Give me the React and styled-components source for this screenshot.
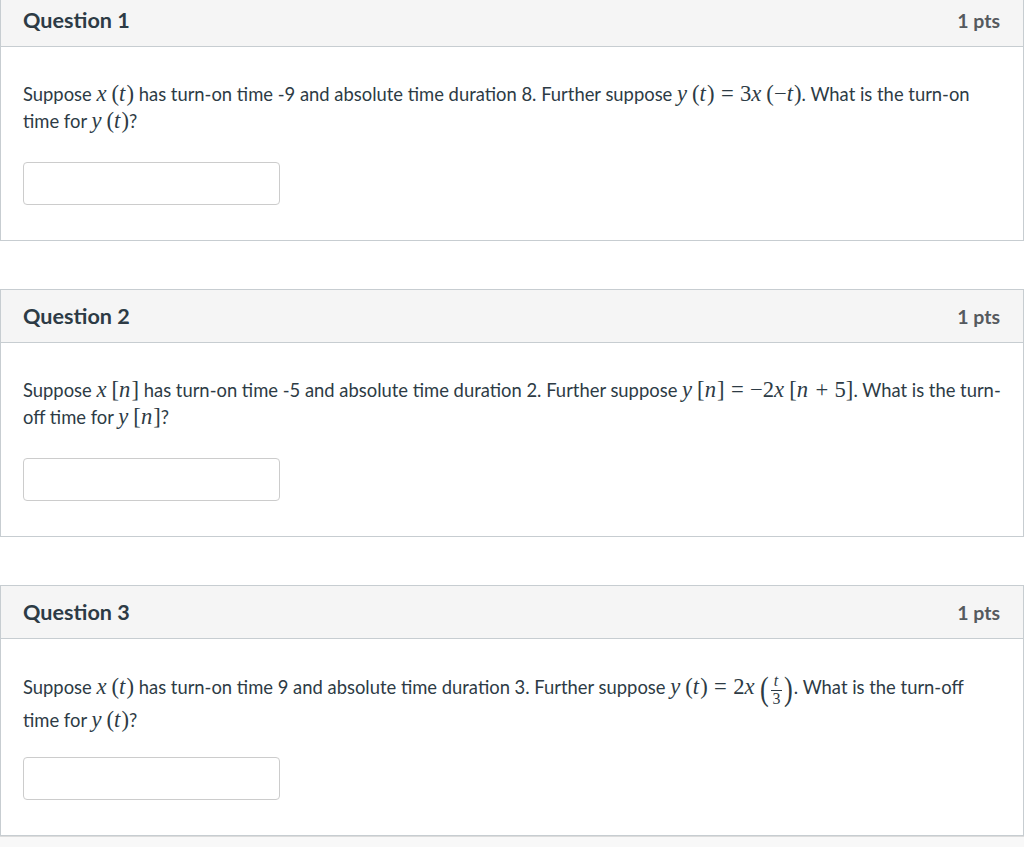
import React from "react";
import styled, { createGlobalStyle } from "styled-components";

const GlobalStyle = createGlobalStyle`
  html, body {
    margin: 0;
    padding: 0;
    background: #ffffff;
  }
  body {
    font-family: Lato, "Liberation Sans", sans-serif;
    color: #2d3b45;
  }
`;

const Page = styled.div`
  margin-top: -7px;
  width: 1024px;
`;

const Card = styled.section`
  border: 1px solid #c7cdd1;
  background: #fff;
  margin-bottom: 48px;
`;

const Header = styled.header`
  display: flex;
  align-items: center;
  justify-content: space-between;
  height: 52px;
  padding: 0 23px 0 22px;
  background: #f5f5f5;
  border-bottom: 1px solid #c7cdd1;
`;

const Title = styled.h2`
  margin: 0;
  font-size: 21.6px;
  font-weight: 700;
  color: #2d3b45;
`;

const Points = styled.span`
  font-size: 19.5px;
  font-weight: 700;
  color: #555a5e;
`;

const Body = styled.div`
  padding: 34px 21px 35px 22px;
`;

const Text = styled.p`
  margin: 0;
  font-size: 18.4px;
  line-height: 27px;
`;

const Answer = styled.input`
  display: block;
  box-sizing: border-box;
  margin-top: ${(p) => p.$gap || 27}px;
  width: 257px;
  height: 43px;
  border: 1px solid #ccc;
  border-radius: 4px;
  background: #fff;
`;

const Math = styled.span`
  font-family: "Liberation Serif", "DejaVu Serif", serif;
  font-size: 1.23em;
  line-height: 1;
  white-space: nowrap;
`;

const V = styled.i`
  font-style: italic;
  margin-right: 0.05em;
`;

const Op = styled.span`
  margin: 0 0.28em;
`;

const Paren = styled.span`
  margin-left: ${(p) => (p.$left ? "0.17em" : "0")};
`;

const BigParen = styled.span`
  display: inline-block;
  font-size: 1.45em;
  line-height: 1;
  vertical-align: -0.2em;
  transform: scaleX(0.8);
  margin-left: ${(p) => (p.$left ? "0.1em" : "0")};
`;

const Frac = styled.span`
  display: inline-flex;
  flex-direction: column;
  align-items: center;
  vertical-align: 0.5em;
  font-size: 0.7em;
  line-height: 1;
  margin: 0 0.05em;
`;

const Num = styled.span`
  padding: 0 0.2em 0.05em;
  border-bottom: 1px solid #2d3b45;
`;

const Den = styled.span`
  padding-top: 0.05em;
`;

const Footer = styled.div`
  height: 20px;
  margin-top: -48px;
  background: #f8f8f8;
  border-top: 1px solid #dcdcdc;
`;

const Question = ({ n, gap, children }) => (
  <Card>
    <Header>
      <Title>Question {n}</Title>
      <Points>1 pts</Points>
    </Header>
    <Body>
      <Text>{children}</Text>
      <Answer type="text" $gap={gap} />
    </Body>
  </Card>
);

export default function App() {
  return (
    <Page>
      <GlobalStyle />
      <Question n={1}>
        Suppose{" "}
        <Math>
          <V>x</V>
          <Paren $left>(</Paren>
          <V>t</V>)
        </Math>{" "}
        has turn-on time -9 and absolute time duration 8. Further suppose{" "}
        <Math>
          <V>y</V>
          <Paren $left>(</Paren>
          <V>t</V>)<Op>=</Op>3<V>x</V>
          <Paren $left>(</Paren>−<V>t</V>)
        </Math>
        . What is the turn-on time for{" "}
        <Math>
          <V>y</V>
          <Paren $left>(</Paren>
          <V>t</V>)
        </Math>
        ?
      </Question>
      <Question n={2}>
        Suppose{" "}
        <Math>
          <V>x</V>
          <Paren $left>[</Paren>
          <V>n</V>]
        </Math>{" "}
        has turn-on time -5 and absolute time duration 2. Further suppose{" "}
        <Math>
          <V>y</V>
          <Paren $left>[</Paren>
          <V>n</V>]<Op>=</Op>−2<V>x</V>
          <Paren $left>[</Paren>
          <V>n</V>
          <Op>+</Op>5]
        </Math>
        . What is the turn-off time for{" "}
        <Math>
          <V>y</V>
          <Paren $left>[</Paren>
          <V>n</V>]
        </Math>
        ?
      </Question>
      <Question n={3} gap={23}>
        Suppose{" "}
        <Math>
          <V>x</V>
          <Paren $left>(</Paren>
          <V>t</V>)
        </Math>{" "}
        has turn-on time 9 and absolute time duration 3. Further suppose{" "}
        <Math>
          <V>y</V>
          <Paren $left>(</Paren>
          <V>t</V>)<Op>=</Op>2<V>x</V>
          <BigParen $left>(</BigParen>
          <Frac>
            <Num>
              <V>t</V>
            </Num>
            <Den>3</Den>
          </Frac>
          <BigParen>)</BigParen>
        </Math>
        . What is the turn-off time for{" "}
        <Math>
          <V>y</V>
          <Paren $left>(</Paren>
          <V>t</V>)
        </Math>
        ?
      </Question>
      <Footer />
    </Page>
  );
}
